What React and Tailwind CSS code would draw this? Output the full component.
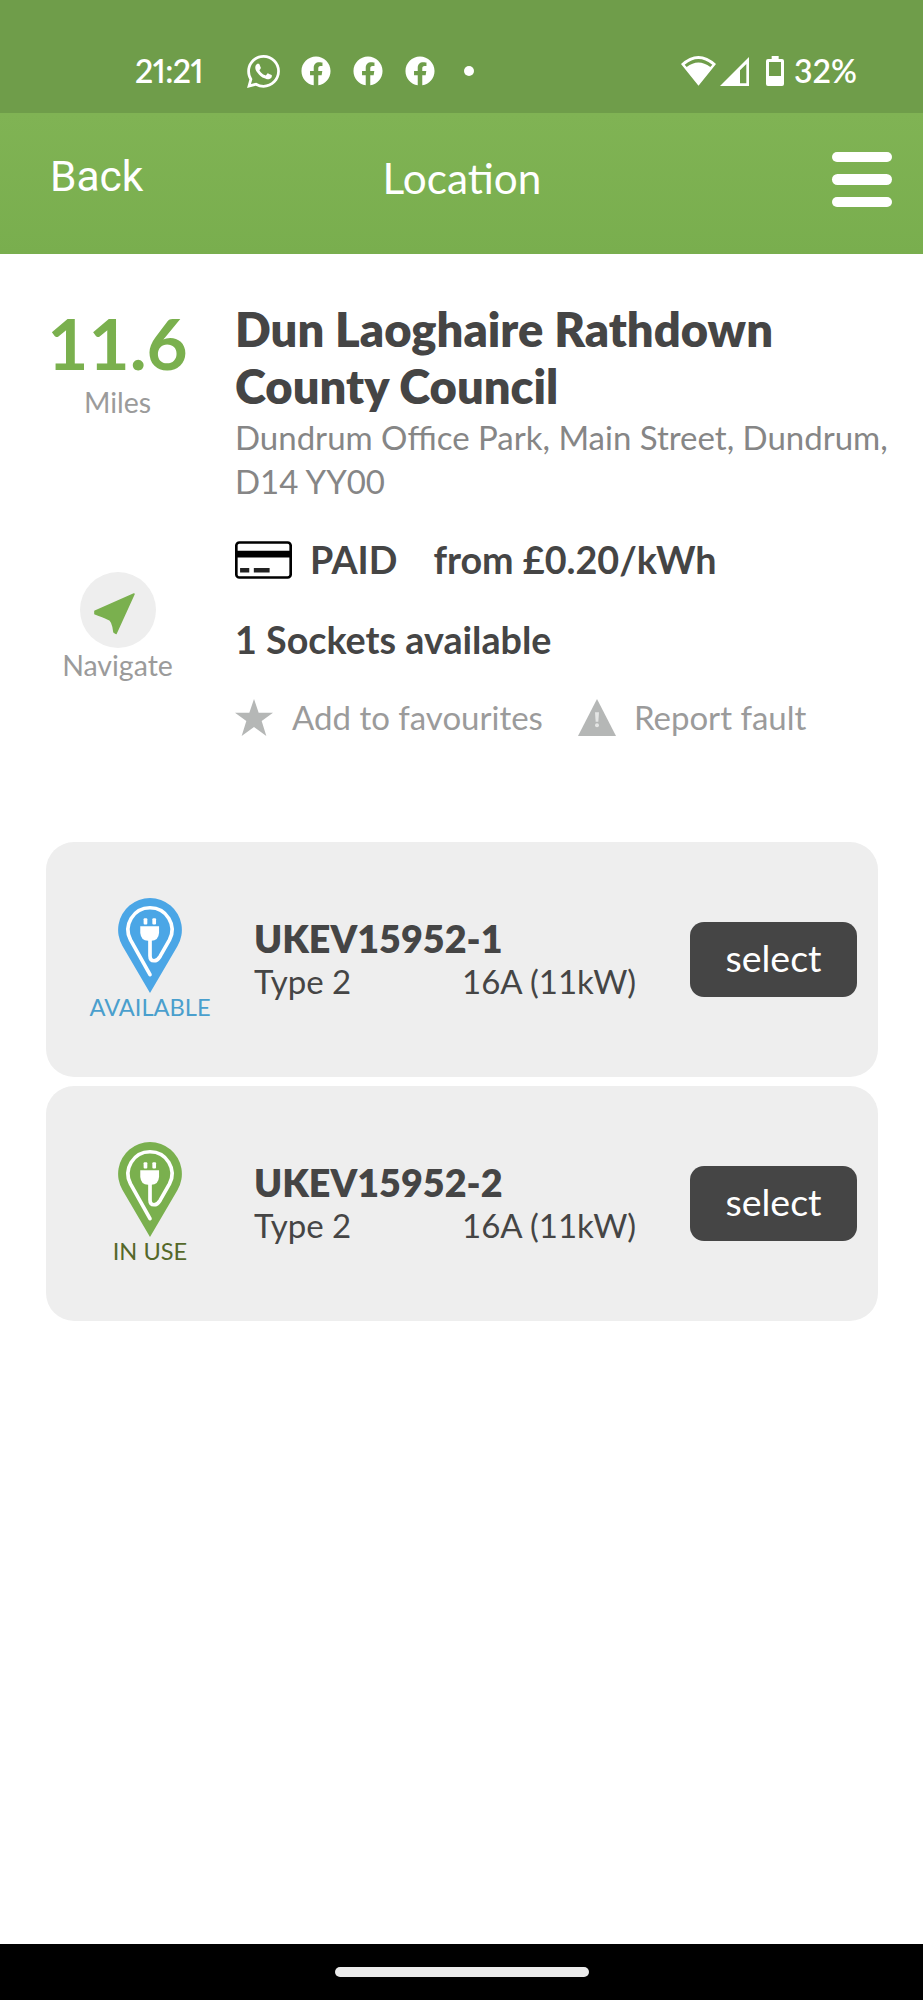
import { FaFacebook } from 'react-icons/fa'
import { SiWhatsapp } from 'react-icons/si'

const sockets = [
  { id: 'UKEV15952-1', type: 'Type 2', power: '16A (11kW)', status: 'AVAILABLE', color: '#4ba6e6', labelClass: 'text-[#4a9fcd]' },
  { id: 'UKEV15952-2', type: 'Type 2', power: '16A (11kW)', status: 'IN USE', color: '#7ab04e', labelClass: 'text-[#55682a]' },
]

function WifiIcon() {
  return (
    <svg width="35" height="30" viewBox="0 0 105 90" fill="#fff">
      <path d="M0 24 Q52 -24 105 24 L52.500 89 Z M11 26 L17 33 Q52 6 88 33 L94 26 Q52 -8 11 26 Z" fillRule="evenodd" />
    </svg>
  )
}

function SignalIcon() {
  return (
    <svg width="29" height="29" viewBox="0 0 87 87" fill="#fff">
      <path d="M87 0 V87 H0 Z M79 21 L60 40 V79 H79 Z" fillRule="evenodd" />
    </svg>
  )
}

function BatteryIcon() {
  return (
    <svg width="18" height="30" viewBox="0 0 54 90" fill="#fff">
      <path d="M17 0 H38 V9 H48 Q54 9 54 15 V84 Q54 90 48 90 H6 Q0 90 0 84 V15 Q0 9 6 9 H17 Z M9 18 V60 H45 V18 Z" fillRule="evenodd" />
    </svg>
  )
}

function CardIcon() {
  return (
    <svg width="57" height="38" viewBox="0 0 56 37">
      <rect x="1.300" y="1.300" width="53.400" height="34.400" rx="3" fill="#fff" stroke="#000" strokeWidth="2.600" />
      <path d="M1 9.500 H55 V16 H1 Z" fill="#000" />
      <path d="M5 28.500 H14 M18.500 28.500 H34" stroke="#222" strokeWidth="4.500" />
    </svg>
  )
}

function NavigateIcon() {
  return (
    <svg width="76" height="76" viewBox="0 0 228 228">
      <circle cx="114" cy="114" r="114" fill="#eeeeee" />
      <path d="M162 66 L108 184 L102 180 Q98 144 84 141 Q70 134 45 125 L45 118 Z" fill="#7ab04e" stroke="#7ab04e" strokeWidth="5" strokeLinejoin="round" />
    </svg>
  )
}

function StarIcon() {
  return (
    <svg width="38" height="37" viewBox="0 0 114 111" fill="#b5b7b6">
      <path d="M57 0 L71 41 H114 L80 66 L94 111 L57 84 L20 111 L34 66 L0 41 H43 Z" />
    </svg>
  )
}

function FaultIcon() {
  return (
    <svg width="38" height="37" viewBox="0 0 114 111">
      <path d="M57 0 L114 111 H0 Z" fill="#b5b7b6" />
      <path d="M51 40 H63 L61 68 H53 Z" fill="#e4e5e4" />
      <circle cx="57" cy="79" r="6" fill="#e4e5e4" />
    </svg>
  )
}

function PlugPin({ color }) {
  return (
    <svg width="64" height="95" viewBox="0 0 190 283">
      <path d="M95 283 L13 143 A95 95 0 1 1 177 143 Z" fill={color} />
      <path
        d="M95 228 L37 125 A65.500 65.500 0 1 1 153 125 L125 174 Q117 187 107 187 Q95 187 95 172 V120"
        fill="none"
        stroke="#fff"
        strokeWidth="11"
        strokeLinecap="round"
      />
      <path d="M66 84 H122 V104 Q120 127 99 127 H89 Q68 127 66 104 Z" fill="#fff" />
      <rect x="76" y="60" width="11" height="19" rx="3" fill="#fff" />
      <rect x="102" y="60" width="11" height="19" rx="3" fill="#fff" />
    </svg>
  )
}

function StatusBar() {
  return (
    <div className="flex h-[113px] items-center bg-[#6f9d4a] pt-[29px] pr-[66px] pl-[135px] text-white">
      <span className="w-[112px] text-[32px] leading-none font-semibold tracking-[-0.5px] proportional-nums">21:21</span>
      <SiWhatsapp size={33} />
      <div className="ml-[21px] flex gap-[22px]">
        <FaFacebook size={30} />
        <FaFacebook size={30} />
        <FaFacebook size={30} />
      </div>
      <span className="ml-[29px] size-2.5 rounded-full bg-white" />
      <div className="ml-auto flex items-center">
        <WifiIcon />
        <span className="ml-1">
          <SignalIcon />
        </span>
        <span className="ml-[17px]">
          <BatteryIcon />
        </span>
        <span className="ml-2.5 text-[32px] leading-none font-semibold">32%</span>
      </div>
    </div>
  )
}

function Header() {
  return (
    <header className="grid h-[141px] grid-cols-3 items-center bg-linear-to-b from-[#80b354] to-[#79ae4e] pr-[31px] pb-[13px] pl-[50px] text-white">
      <button className="justify-self-start font-['Roboto',sans-serif] text-[42.5px] leading-none">Back</button>
      <h1 className="mt-0.5 -ml-[18px] text-center text-[42.3px] leading-none">Location</h1>
      <button className="mt-[5px] flex flex-col gap-3 justify-self-end">
        <span className="h-[10.5px] w-[60px] rounded-full bg-white" />
        <span className="h-[10.5px] w-[60px] rounded-full bg-white" />
        <span className="h-[10.5px] w-[60px] rounded-full bg-white" />
      </button>
    </header>
  )
}

function LocationDetails() {
  return (
    <section className="flex h-[541px] pt-[46px]">
      <div className="flex w-[235px] shrink-0 flex-col items-center text-[28.5px] leading-[34px] text-[#9b9b9b]">
        <span className="text-[71px] leading-[85px] font-bold text-[#7ab04e]">11.6</span>
        <span>Miles</span>
        <button className="mt-[153px] flex flex-col items-center">
          <NavigateIcon />
          <span>Navigate</span>
        </button>
      </div>
      <div className="flex flex-1 flex-col pt-px text-[#454545]">
        <h2 className="text-[47.1px] leading-[57px] font-extrabold">
          Dun Laoghaire Rathdown
          <br />
          County Council
        </h2>
        <p className="text-[33px] leading-[44px] whitespace-nowrap text-[#868686]">
          Dundrum Office Park, Main Street, Dundrum,
          <br />
          D14 YY00
        </p>
        <div className="mt-[34px] flex h-[46px] items-center text-[37.7px] leading-none font-bold">
          <CardIcon />
          <span className="ml-[18px]">PAID</span>
          <span className="ml-9">from £0.20/kWh</span>
        </div>
        <p className="mt-[34px] text-[37.7px] leading-[46px] font-bold">1 Sockets available</p>
        <div className="mt-[33px] flex h-[42px] items-center text-[33px] leading-none text-[#9b9b9b]">
          <StarIcon />
          <span className="ml-[19px]">Add to favourites</span>
          <span className="ml-[35px]">
            <FaultIcon />
          </span>
          <span className="ml-[18px]">Report fault</span>
        </div>
      </div>
    </section>
  )
}

function SocketCard({ socket }) {
  return (
    <li className="flex h-[235px] items-center rounded-[28px] bg-[#eeeeee] pr-[21px] text-[#454545]">
      <div className="flex w-[208px] flex-col items-center">
        <PlugPin color={socket.color} />
        <span className={`text-[23.6px] leading-7 ${socket.labelClass}`}>{socket.status}</span>
      </div>
      <div className="flex-1">
        <p className="text-[37.7px] leading-[42px] font-extrabold">{socket.id}</p>
        <div className="flex text-[33px] leading-[42px]">
          <span className="w-[208px]">{socket.type}</span>
          <span>{socket.power}</span>
        </div>
      </div>
      <button className="h-[75px] w-[167px] rounded-[14px] bg-[#454545] pb-1 text-[37.5px] leading-none text-white">select</button>
    </li>
  )
}

export default function App() {
  return (
    <div className="flex h-[2000px] w-full flex-col bg-white font-['Lato',sans-serif]">
      <StatusBar />
      <Header />
      <main className="flex-1">
        <LocationDetails />
        <ul className="mt-[47px] flex flex-col gap-[9px] pr-[45px] pl-[46px]">
          {sockets.map((socket) => (
            <SocketCard key={socket.id} socket={socket} />
          ))}
        </ul>
      </main>
      <div className="flex h-[56px] items-center justify-center bg-black">
        <span className="mt-[-1px] h-[10px] w-[254px] rounded-full bg-[#ebebeb]" />
      </div>
    </div>
  )
}
